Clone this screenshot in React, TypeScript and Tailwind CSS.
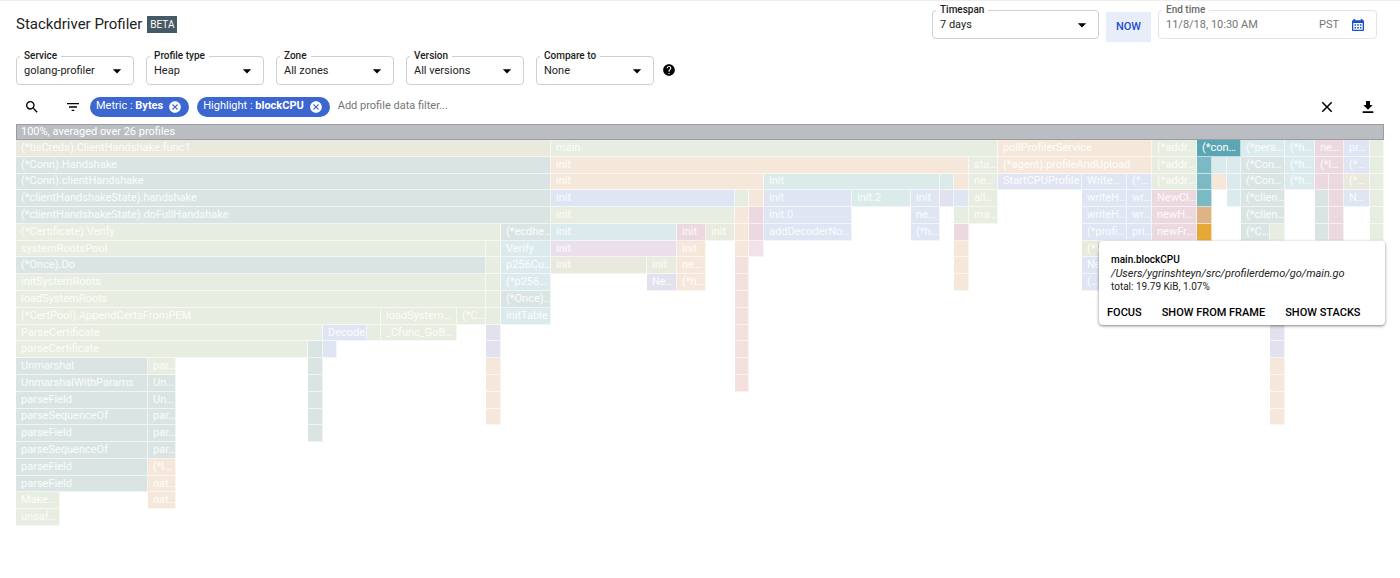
import { useId } from "react";
import type { ReactNode } from "react";
import { MdArrowDropDown, MdCancel, MdClose, MdFilterList, MdHelp, MdSearch } from "react-icons/md";

const TONES = {
  green: "bg-[#e7ede0]",
  olive: "bg-[#e9ebdf]",
  tan: "bg-[#eae9dd]",
  teal: "bg-[#dae5e3]",
  cyan: "bg-[#dbebed]",
  mint: "bg-[#dbebea]",
  blue: "bg-[#dfe5f3]",
  purple: "bg-[#e2e2ef]",
  magenta: "bg-[#ecdfec]",
  pink: "bg-[#ecd9e0]",
  rose: "bg-[#f2e1e8]",
  red: "bg-[#f4e0dc]",
  orange: "bg-[#f5e8db]",
  hot: "bg-[#5aa6b5]",
  warmTeal: "bg-[#7bb9c5]",
  warm: "bg-[#dfb485]",
  target: "bg-[#e8a838]",
};

type Tone = keyof typeof TONES;
/** start, end (in chart units), tone, label */
type Frame = [number, number, Tone, string?];

const CHART_START = 16;
const CHART_UNITS = 1368;

const ROWS: Frame[][] = [
  [
    [16, 551, "tan", "(*tlsCreds).ClientHandshake.func1"], [551, 998, "green", "main"],
    [998, 1152, "orange", "pollProfilerService"], [1152, 1197, "green", "(*addr…"], [1197, 1241, "hot", "(*con…"],
    [1241, 1285, "cyan", "(*pers…"], [1285, 1315, "cyan", "(*h…"], [1315, 1344, "pink", "ne…"],
    [1344, 1370, "blue", "pr…"], [1370, 1384, "green"],
  ],
  [
    [16, 551, "teal", "(*Conn).Handshake"], [551, 969, "orange", "init"], [969, 998, "green", "sta…"],
    [998, 1152, "orange", "(*agent).profileAndUpload"], [1152, 1197, "green", "(*addr…"], [1197, 1212, "warmTeal"],
    [1212, 1227, "cyan"], [1227, 1241, "cyan"], [1241, 1285, "teal", "(*Con…"], [1285, 1315, "cyan", "(*h…"],
    [1315, 1344, "pink", "(*l…"], [1344, 1370, "blue", "(*…"], [1370, 1384, "green"],
  ],
  [
    [16, 551, "teal", "(*Conn).clientHandshake"], [551, 764, "orange", "init"], [764, 940, "mint", "init"],
    [940, 954, "mint"], [954, 969, "orange"], [969, 998, "green", "ne…"], [998, 1082, "blue", "StartCPUProfile"],
    [1082, 1127, "blue", "Write…"], [1127, 1152, "blue", "(*…"], [1152, 1197, "green", "(*addr…"],
    [1197, 1212, "warmTeal"], [1212, 1227, "orange"], [1227, 1241, "cyan"], [1241, 1285, "teal", "(*Con…"],
    [1285, 1315, "cyan", "(*h…"], [1315, 1329, "pink"], [1329, 1344, "pink"], [1344, 1370, "tan", "(*…"],
    [1370, 1384, "green"],
  ],
  [
    [16, 551, "teal", "(*clientHandshakeState).handshake"], [551, 735, "blue", "init"], [735, 749, "green"],
    [749, 764, "orange"], [764, 852, "blue", "init"], [852, 911, "mint", "init.2"], [911, 940, "blue", "init"],
    [940, 954, "purple"], [954, 969, "blue"], [969, 998, "green", "all…"], [1082, 1127, "blue", "writeH…"],
    [1127, 1152, "blue", "wr…"], [1152, 1197, "pink", "NewCl…"], [1197, 1212, "warmTeal"], [1227, 1241, "cyan"],
    [1241, 1285, "teal", "(*clien…"], [1315, 1329, "teal"], [1329, 1344, "pink"], [1344, 1370, "blue", "N…"],
    [1370, 1384, "green"],
  ],
  [
    [16, 551, "teal", "(*clientHandshakeState).doFullHandshake"], [551, 735, "green", "init"], [735, 749, "orange"],
    [749, 764, "pink"], [764, 852, "blue", "init.0"], [911, 940, "blue", "ne…"], [954, 969, "green"],
    [969, 998, "green", "ma…"], [1082, 1127, "blue", "writeH…"], [1127, 1152, "blue", "wr…"],
    [1152, 1197, "pink", "newH…"], [1197, 1212, "warm"], [1241, 1285, "teal", "(*clien…"], [1315, 1329, "teal"],
    [1329, 1344, "pink"], [1370, 1384, "green"],
  ],
  [
    [16, 501, "green", "(*Certificate).Verify"], [501, 551, "teal", "(*ecdhe…"], [551, 677, "cyan", "init"],
    [677, 706, "pink", "init"], [706, 735, "olive", "init"], [735, 749, "orange"], [749, 764, "pink"],
    [764, 852, "blue", "addDecoderNo…"], [911, 940, "blue", "(*h…"], [954, 969, "pink"],
    [1082, 1127, "blue", "(*profi…"], [1127, 1152, "blue", "pri…"], [1152, 1197, "pink", "newFr…"],
    [1197, 1212, "target"], [1241, 1270, "teal", "(*C…"], [1270, 1285, "green"], [1315, 1329, "teal"],
    [1329, 1344, "pink"], [1370, 1384, "green"],
  ],
  [
    [16, 486, "green", "systemRootsPool"], [486, 501, "green"], [501, 551, "cyan", "Verify"],
    [551, 677, "magenta", "init"], [677, 706, "orange", "init"], [735, 749, "orange"], [749, 764, "rose"],
    [954, 969, "orange"], [1082, 1127, "tan", "(*Wr…"],
  ],
  [
    [16, 486, "teal", "(*Once).Do"], [486, 501, "green"], [501, 551, "cyan", "p256Cu…"], [551, 647, "tan", "init"],
    [647, 677, "olive", "init"], [677, 706, "orange", "ne…"], [735, 749, "red"], [954, 969, "orange"],
    [1082, 1127, "blue", "New…"],
  ],
  [
    [16, 486, "green", "initSystemRoots"], [486, 501, "green"], [501, 551, "cyan", "(*p256…"],
    [647, 677, "purple", "Ne…"], [677, 706, "orange", "(*h…"], [735, 749, "red"], [954, 969, "orange"],
    [1082, 1104, "blue", "(…"],
  ],
  [
    [16, 486, "green", "loadSystemRoots"], [486, 501, "green"], [501, 551, "teal", "(*Once)…"], [735, 749, "red"],
  ],
  [
    [16, 381, "green", "(*CertPool).AppendCertsFromPEM"], [381, 457, "green", "loadSystem…"],
    [457, 486, "green", "(*C…"], [486, 501, "green"], [501, 551, "cyan", "initTable"], [735, 749, "red"],
  ],
  [
    [16, 323, "green", "ParseCertificate"], [323, 367, "blue", "Decode"], [367, 381, "green"],
    [381, 457, "green", "_Cfunc_GoB…"], [486, 501, "purple"], [735, 749, "red"], [1270, 1285, "purple"],
  ],
  [
    [16, 308, "green", "parseCertificate"], [308, 323, "teal"], [323, 337, "blue"], [486, 501, "purple"],
    [735, 749, "red"], [1270, 1285, "purple"],
  ],
  [
    [16, 148, "teal", "Unmarshal"], [148, 176, "green", "par…"], [308, 323, "teal"], [486, 501, "orange"],
    [735, 749, "red"], [1270, 1285, "orange"],
  ],
  [
    [16, 148, "teal", "UnmarshalWithParams"], [148, 176, "teal", "Un…"], [308, 323, "teal"],
    [486, 501, "orange"], [735, 749, "red"], [1270, 1285, "orange"],
  ],
  [
    [16, 148, "teal", "parseField"], [148, 176, "teal", "Un…"], [308, 323, "teal"], [486, 501, "orange"],
    [1270, 1285, "orange"],
  ],
  [
    [16, 148, "teal", "parseSequenceOf"], [148, 176, "teal", "par…"], [308, 323, "teal"], [486, 501, "orange"],
    [1270, 1285, "orange"],
  ],
  [[16, 148, "teal", "parseField"], [148, 176, "teal", "par…"], [308, 323, "teal"]],
  [[16, 148, "teal", "parseSequenceOf"], [148, 176, "teal", "par…"]],
  [[16, 148, "teal", "parseField"], [148, 176, "orange", "(*l…"]],
  [[16, 148, "teal", "parseField"], [148, 176, "orange", "nat…"]],
  [[16, 60, "green", "Make…"], [148, 176, "orange", "nat…"]],
  [[16, 60, "green", "unsaf…"]],
];

const percent = (units: number) => `${(units / CHART_UNITS) * 100}%`;

function FlameRow({ frames }: { frames: Frame[] }) {
  return (
    <div className="flex min-h-0">
      {frames.map(([start, end, tone, label], i) => {
        const previousEnd = i === 0 ? CHART_START : frames[i - 1][1];
        return (
          <div
            key={start}
            className={`flex shrink-0 items-center overflow-hidden border-r border-b border-white/60 pl-[5px] whitespace-nowrap ${
              tone === "hot" ? "text-white" : "text-white/85"
            } ${TONES[tone]}`}
            style={{ width: percent(end - start), marginLeft: percent(start - previousEnd) }}
          >
            {label}
          </div>
        );
      })}
    </div>
  );
}

function Outlined({ label, id, muted, className, children }: {
  label: string; id: string; muted?: boolean; className: string; children: ReactNode;
}) {
  return (
    <fieldset className={`min-w-0 rounded border pl-[3px] ${muted ? "border-[#e4e4e4]" : "border-[#cfcfcf]"} ${className}`}>
      <legend className={`px-1 text-[10px] leading-3 font-medium ${muted ? "text-[#6b6b6b]" : "text-[#1c1c1c]"}`}>
        <label htmlFor={id}>{label}</label>
      </legend>
      {children}
    </fieldset>
  );
}

function SelectField({ label, value, className }: { label: string; value: string; className: string }) {
  const id = useId();
  return (
    <Outlined label={label} id={id} className={className}>
      <div className="grid h-[22px] items-center pb-1">
        <select id={id} className="col-start-1 row-start-1 w-full appearance-none bg-transparent pl-1 text-[11px] leading-4 text-[#222] outline-none">
          <option>{value}</option>
        </select>
        <MdArrowDropDown className="pointer-events-none col-start-1 row-start-1 -my-0.5 mr-1.5 size-5 justify-self-end text-black" />
      </div>
    </Outlined>
  );
}

function Chip({ name, value }: { name: string; value: string }) {
  return (
    <span className="flex h-5 items-center gap-[5px] rounded-full bg-[#3c66d0] pr-[7px] pl-1.5 text-[11px] whitespace-nowrap text-white">
      <span>
        {name} : <b className="font-bold">{value}</b>
      </span>
      <button type="button" aria-label={`Remove ${name}`}>
        <MdCancel className="size-3.5" />
      </button>
    </span>
  );
}

function CalendarIcon() {
  return (
    <svg viewBox="0 0 14 14" className="h-3.5 w-3.5" aria-hidden="true">
      <path
        fill="#1a4fd0"
        fillRule="evenodd"
        d="M2.500 1h1.700v1.300h5.600V1h1.700v1.300h.5c.6 0 1 .4 1 1V12c0 .6-.4 1-1 1H2c-.6 0-1-.4-1-1V3.300c0-.6.4-1 1-1h.5zM2.300 5v6.700h9.400V5z"
      />
      <path fill="#1a4fd0" d="M3.500 6.300h1.600v1.500H3.500zM6.200 6.300h1.600v1.500H6.200zM8.900 6.300h1.600v1.500H8.900zM3.500 9h1.600v1.500H3.500zM6.200 9h1.600v1.500H6.200zM8.900 9h1.600v1.500H8.900z" />
    </svg>
  );
}

function DownloadIcon() {
  return (
    <svg viewBox="0 0 24 24" className="size-4" aria-hidden="true">
      <path fill="currentColor" d="M19 9h-4V3H9v6H5l7 7 7-7zM4 18.500v2.500h16v-2.500H4z" />
    </svg>
  );
}

function Header() {
  return (
    <header className="flex items-start justify-between pt-[3px] pr-[7px]">
      <div className="flex items-center gap-[5px] pt-3">
        <h1 className="text-[15px] leading-[17px] text-[#222]">Stackdriver Profiler</h1>
        <span className="bg-[#455a64] px-[3px] text-[10px] leading-[17px] text-white">BETA</span>
      </div>
      <div className="flex items-start gap-[7px]">
        <SelectField label="Timespan" value="7 days" className="w-[167px]" />
        <button type="button" className="mt-2 h-[30px] w-[45px] bg-[#e8edfa] text-[11px] font-medium text-[#1a4fd0]">
          NOW
        </button>
        <Outlined label="End time" id="end-time" muted className="w-[219px]">
          <div className="flex h-[22px] items-center pr-[11px] pb-1 text-[11px] text-[#757575]">
            <input id="end-time" readOnly defaultValue="11/8/18, 10:30 AM" className="min-w-0 flex-1 bg-transparent pl-1 outline-none" />
            <span className="mr-3">PST</span>
            <button type="button" aria-label="Choose date">
              <CalendarIcon />
            </button>
          </div>
        </Outlined>
      </div>
    </header>
  );
}

function FilterBar() {
  return (
    <div className="flex h-[39px] items-center px-2 pt-1 text-black">
      <button type="button" aria-label="Search" className="mr-[25px]">
        <MdSearch className="size-4" />
      </button>
      <MdFilterList className="mr-[9px] size-4" />
      <div className="flex gap-2">
        <Chip name="Metric" value="Bytes" />
        <Chip name="Highlight" value="blockCPU" />
      </div>
      <input
        aria-label="Add profile data filter"
        placeholder="Add profile data filter..."
        className="ml-2 min-w-0 flex-1 bg-transparent text-[11px] outline-none placeholder:text-[#757575]"
      />
      <button type="button" aria-label="Clear filters" className="mr-6">
        <MdClose className="size-[18px]" />
      </button>
      <button type="button" aria-label="Download">
        <DownloadIcon />
      </button>
    </div>
  );
}

function FrameCard() {
  return (
    <div className="absolute top-[117px] -right-px w-[286px] rounded bg-white pt-3 pb-[3px] text-[#222] shadow-[0_1px_3px_rgba(0,0,0,0.5)]">
      <div className="px-3 text-[10px] leading-[14px]">
        <p className="font-medium text-black">main.blockCPU</p>
        <p className="text-[11px] leading-[13px] italic">/Users/ygrinshteyn/src/profilerdemo/go/main.go</p>
        <p>total: 19.79 KiB, 1.07%</p>
      </div>
      <div className="mt-2.5 flex gap-5 px-2 text-[11px] leading-[18px] font-medium text-black">
        <button type="button">FOCUS</button>
        <button type="button">SHOW FROM FRAME</button>
        <button type="button">SHOW STACKS</button>
      </div>
    </div>
  );
}

export default function App() {
  return (
    <main className="min-h-screen border-t border-[#eeeeee] bg-white px-4 font-['Roboto',sans-serif]">
      <Header />
      <div className="mt-2 flex items-start gap-3">
        <SelectField label="Service" value="golang-profiler" className="w-[118px]" />
        <SelectField label="Profile type" value="Heap" className="w-[118px]" />
        <SelectField label="Zone" value="All zones" className="w-[118px]" />
        <SelectField label="Version" value="All versions" className="w-[118px]" />
        <SelectField label="Compare to" value="None" className="w-[118px]" />
        <button type="button" aria-label="Help" className="-ml-1 mt-[13px]">
          <MdHelp className="size-3.5" />
        </button>
      </div>
      <FilterBar />
      <section aria-label="Flame graph" className="relative text-[11px] leading-4">
        <div className="flex h-4 items-center border border-[#9b9ba3] bg-[#babec3] pl-1 text-white">
          100%, averaged over 26 profiles
        </div>
        <div className="grid h-[386px] grid-rows-[repeat(23,minmax(0,1fr))]">
          {ROWS.map((frames, i) => (
            <FlameRow key={i} frames={frames} />
          ))}
        </div>
        <FrameCard />
      </section>
    </main>
  );
}
